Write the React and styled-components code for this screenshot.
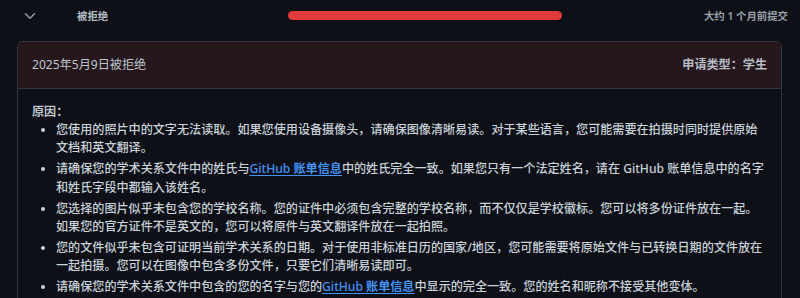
import React from 'react';
import styled, { createGlobalStyle } from 'styled-components';
import { ChevronDown } from 'lucide-react';

const GlobalStyle = createGlobalStyle`
    html, body {
        margin: 0;
        padding: 0;
        background-color: #0d1117;
        overflow: hidden;
    }

    body {
        font-family: "Noto Sans", "Noto Sans CJK SC", sans-serif;
        color: #c9d1d9;
    }
`

const Page = styled.div`
    width: 800px;
    height: 298px;
    overflow: hidden;
`

const SummaryRow = styled.div`
    height: 31px;
    padding: 0 12px 0 21px;

    display: grid;
    grid-template-columns: 56px 211px 274px 1fr auto;
    align-items: center;
`

const Toggle = styled.span`
    display: flex;
    align-items: center;
    color: #9198a1;
`

const StatusLabel = styled.span`
    font-size: 10.4px;
    font-weight: 600;
    color: #b7bdc5;
`

const Progress = styled.div`
    height: 9px;
    border-radius: 5px;
    background-color: ${props => props.color};
`

const Submitted = styled.span`
    grid-column: 5;
    font-size: 10.4px;
    font-weight: 600;
    color: #9ba2ab;
`

const Card = styled.div`
    margin: 10px 18px 0 17px;
    border: 1px solid #30363d;
    border-radius: 6px;
    overflow: hidden;
`

const CardHeader = styled.div`
    padding: 14px;
    background-color: #25171c;
    border-bottom: 1px solid #30363d;

    display: flex;
    justify-content: space-between;
    align-items: center;

    font-size: 12.1px;
    line-height: 18px;
`

const HeaderTitle = styled.span`
    color: #bfc5cc;
`

const HeaderMeta = styled.span`
    font-weight: 700;
    color: #b7bdc5;
`

const CardBody = styled.div`
    padding: 14px;
    font-size: 12.1px;
    line-height: 1.5;
    font-weight: 500;
`

const Label = styled.p`
    margin: 0;
    font-weight: 700;
    color: #bfc5cc;
`

const ReasonList = styled.ul`
    margin: 0;
    padding-left: 24px;
`

const Reason = styled.li`
    & + & {
        margin-top: 3px;
    }
`

const Link = styled.a`
    color: #4493f8;
    text-decoration: underline;
    text-underline-offset: 2px;

    b {
        font-weight: 700;
    }
`

const BillingLink = () => (
    <Link href="#">GitHub <b>账单信息</b></Link>
)

const App = () => {
    return (
        <Page>
            <GlobalStyle />
            <SummaryRow>
                <Toggle>
                    <ChevronDown size={18} strokeWidth={2} />
                </Toggle>
                <StatusLabel>被拒绝</StatusLabel>
                <Progress color="#e03a3a" />
                <Submitted>大约 1 个月前提交</Submitted>
            </SummaryRow>
            <Card>
                <CardHeader>
                    <HeaderTitle>2025年5月9日被拒绝</HeaderTitle>
                    <HeaderMeta>申请类型：学生</HeaderMeta>
                </CardHeader>
                <CardBody>
                    <Label>原因：</Label>
                    <ReasonList>
                        <Reason>您使用的照片中的文字无法读取。如果您使用设备摄像头，请确保图像清晰易读。对于某些语言，您可能需要在拍摄时同时提供原始文档和英文翻译。</Reason>
                        <Reason>请确保您的学术关系文件中的姓氏与<BillingLink />中的姓氏完全一致。如果您只有一个法定姓名，请在 GitHub 账单信息中的名字和姓氏字段中都输入该姓名。</Reason>
                        <Reason>您选择的图片似乎未包含您的学校名称。您的证件中必须包含完整的学校名称，而不仅仅是学校徽标。您可以将多份证件放在一起。如果您的官方证件不是英文的，您可以将原件与英文翻译件放在一起拍照。</Reason>
                        <Reason>您的文件似乎未包含可证明当前学术关系的日期。对于使用非标准日历的国家/地区，您可能需要将原始文件与已转换日期的文件放在一起拍摄。您可以在图像中包含多份文件，只要它们清晰易读即可。</Reason>
                        <Reason>请确保您的学术关系文件中包含的您的名字与您的<BillingLink />中显示的完全一致。您的姓名和昵称不接受其他变体。</Reason>
                    </ReasonList>
                </CardBody>
            </Card>
        </Page>
    )
}

export default App
